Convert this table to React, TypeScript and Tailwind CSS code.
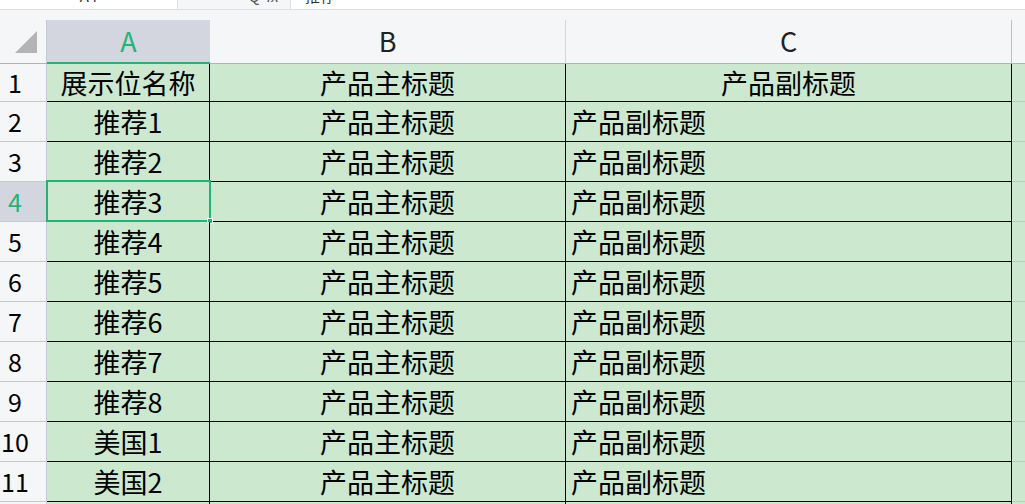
import React from "react";

const rows = [
  { a: "展示位名称", b: "产品主标题", c: "产品副标题", head: true },
  { a: "推荐1", b: "产品主标题", c: "产品副标题" },
  { a: "推荐2", b: "产品主标题", c: "产品副标题" },
  { a: "推荐3", b: "产品主标题", c: "产品副标题" },
  { a: "推荐4", b: "产品主标题", c: "产品副标题" },
  { a: "推荐5", b: "产品主标题", c: "产品副标题" },
  { a: "推荐6", b: "产品主标题", c: "产品副标题" },
  { a: "推荐7", b: "产品主标题", c: "产品副标题" },
  { a: "推荐8", b: "产品主标题", c: "产品副标题" },
  { a: "美国1", b: "产品主标题", c: "产品副标题" },
  { a: "美国2", b: "产品主标题", c: "产品副标题" },
  { a: "", b: "", c: "" },
];

const font = { fontFamily: '"Noto Sans CJK SC", "Noto Sans", sans-serif' };

export default function App() {
  return (
    <div
      className="w-[1025px] h-[504px] overflow-hidden bg-[#f5f6f8] text-black"
      style={font}
    >
      {/* formula bar, mostly scrolled off */}
      <div className="flex h-[10px] border-b border-[#dcdfe6]">
        <div className="w-[178px] bg-white border-r border-[#dcdfe6] overflow-hidden flex justify-center">
          <span className="text-[15px] leading-none -mt-[12px] text-[#333]">A4</span>
        </div>
        <div className="w-[112px] flex justify-end pr-[12px] gap-[6px] overflow-hidden">
          <span className="text-[15px] leading-none -mt-[12px] text-[#555]">Q</span>
          <span className="text-[15px] leading-none -mt-[12px] italic text-[#555]">fx</span>
        </div>
        <div className="flex-1 bg-white border-l border-[#dcdfe6] overflow-hidden pl-[14px]">
          <span className="text-[15px] leading-none -mt-[12px] block text-[#333]">推荐</span>
        </div>
      </div>
      <div className="h-[10px]" />

      {/* column header */}
      <div className="flex h-[44px] border-b border-[#aab1c9]">
        <div className="w-[47px] shrink-0 border-r border-[#c5c9d6] relative">
          <svg className="absolute left-[15px] top-[11px]" width="23" height="22" viewBox="0 0 23 22">
            <polygon points="0,22 22,22 22,0" fill="#b4b4b4" />
          </svg>
        </div>
        <div className="w-[163px] shrink-0 bg-[#d3d6de] border-b-2 border-[#1fb57a] -mb-px flex items-center justify-center text-[27px] text-[#1fb57a]">
          A
        </div>
        <div className="w-[356px] shrink-0 border-r border-[#d0d4e0] flex items-center justify-center text-[27px] text-[#222]">
          B
        </div>
        <div className="w-[446px] shrink-0 border-r border-[#b8bdd0] flex items-center justify-center text-[27px] text-[#222]">
          C
        </div>
        <div className="flex-1" />
      </div>

      {/* data rows */}
      {rows.map((r, i) => {
        const sel = i === 3;
        return (
          <div
            key={i}
            className={`flex ${r.head ? "h-[38px]" : "h-[40px]"} text-[27px] leading-none`}
          >
            <div
              className={`w-[47px] shrink-0 border-r border-b border-[#c5c9d6] flex items-center text-[25px] ${
                sel ? "bg-[#d3d6de] text-[#1fb57a]" : "text-black"
              }`}
            >
              <span className="w-[30px] text-center">{i + 1}</span>
            </div>
            <div className="w-[163px] shrink-0 bg-[#cce8cf] border-r border-b border-black flex items-center justify-center relative">
              {r.a}
              {sel && (
                <>
                  <div className="absolute -left-[1px] -top-[2px] w-[165px] h-[42px] border-2 border-[#1fb57a]" />
                  <div className="absolute -right-[4px] -bottom-[3px] w-[6px] h-[6px] bg-[#1fb57a] border border-white" />
                </>
              )}
            </div>
            <div className="w-[356px] shrink-0 bg-[#cce8cf] border-r border-b border-black flex items-center justify-center">
              {r.b}
            </div>
            <div
              className={`w-[446px] shrink-0 bg-[#cce8cf] border-r border-b border-black flex items-center ${
                r.head ? "justify-center" : "pl-[5px]"
              }`}
            >
              {r.c}
            </div>
            <div className="flex-1 bg-[#cce8cf] border-b border-[#c0c5d6]" />
          </div>
        );
      })}
    </div>
  );
}
